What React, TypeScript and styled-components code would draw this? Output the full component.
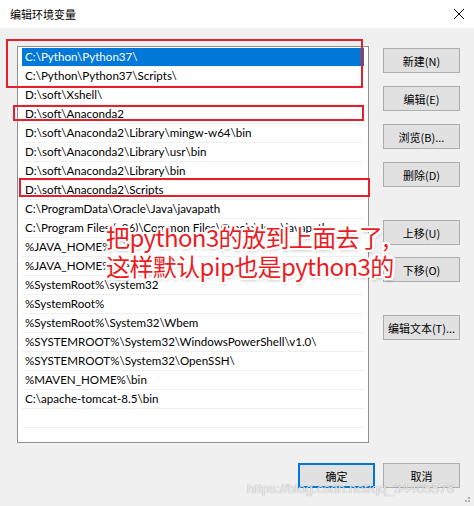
import styled, { createGlobalStyle } from "styled-components";

const GlobalStyle = createGlobalStyle`
  html, body {
    margin: 0;
    padding: 0;
    background: #f0f0f0;
  }
  * {
    box-sizing: border-box;
  }
`;

const Dialog = styled.div`
  position: relative;
  width: 474px;
  height: 506px;
  background: #f0f0f0;
  font-family: "Noto Sans", "Noto Sans CJK SC", sans-serif;
  color: #000;
  overflow: hidden;
`;

const TitleBar = styled.div`
  height: 28px;
  background: #fff;
  display: flex;
  align-items: center;
  justify-content: space-between;
  padding: 0 9px 0 10px;
`;

const Title = styled.span`
  font-family: "Noto Sans CJK SC", sans-serif;
  font-size: 11px;
`;

const Body = styled.div`
  display: flex;
  gap: 14px;
  padding: 18px 14px 0 17px;
`;

const ListBox = styled.div`
  width: 353px;
  height: 397px;
  background: #fff;
  border: 1px solid #8f8f8f;
  padding: 1px 4px;
  overflow: hidden;
`;

const Row = styled.div<{ $selected?: boolean }>`
  height: 19px;
  line-height: 18px;
  padding-left: 3px;
  font-family: Lato, "Noto Sans", sans-serif;
  font-size: 11.6px;
  white-space: nowrap;
  overflow: hidden;
  border-bottom: 1px solid #f0f0f0;
  background: ${(p) => (p.$selected ? "#0078d7" : "transparent")};
  color: ${(p) => (p.$selected ? "#fff" : "#000")};
`;

const ButtonColumn = styled.div`
  display: flex;
  flex-direction: column;
  gap: 33px;
  padding-top: 2px;
`;

const ButtonGroup = styled.div<{ $gap: number }>`
  display: flex;
  flex-direction: column;
  gap: ${(p) => p.$gap}px;
`;

const Button = styled.div<{ $primary?: boolean }>`
  width: 77px;
  height: 25px;
  display: flex;
  align-items: center;
  justify-content: center;
  background: #e1e1e1;
  border: ${(p) => (p.$primary ? "2px solid #0078d7" : "1px solid #adadad")};
  font-family: "Noto Sans CJK SC", sans-serif;
  font-size: 11px;
`;

const Footer = styled.div`
  display: flex;
  justify-content: flex-end;
  gap: 8px;
  padding: 20px 14px 0 0;
`;

// annotation boxes drawn over the list
const RedBox = styled.div<{ $x: number; $y: number; $w: number; $h: number }>`
  position: absolute;
  left: ${(p) => p.$x}px;
  top: ${(p) => p.$y}px;
  width: ${(p) => p.$w}px;
  height: ${(p) => p.$h}px;
  border: 2px solid #e3202c;
`;

const Note = styled.div`
  position: absolute;
  left: 106px;
  top: 222px;
  font-family: "Noto Sans CJK SC", sans-serif;
  font-size: 24px;
  letter-spacing: -0.6px;
  line-height: 29px;
  color: #ea1c24;
  white-space: nowrap;
  text-shadow: 2px 0 0 #fff, -2px 0 0 #fff, 0 2px 0 #fff, 0 -2px 0 #fff,
    2px 2px 0 #fff, -2px -2px 0 #fff, 2px -2px 0 #fff, -2px 2px 0 #fff,
    1px 3px 3px rgba(0, 0, 0, 0.25);
`;

const Watermark = styled.div`
  position: absolute;
  left: 247px;
  top: 481px;
  font-family: "Liberation Sans", sans-serif;
  font-size: 13.5px;
  color: rgba(255, 255, 255, 0.85);
  text-shadow: 0 0 1px rgba(0, 0, 0, 0.45);
  white-space: nowrap;
`;

const Grip = styled.svg`
  position: absolute;
  right: 3px;
  bottom: 3px;
`;

const paths = [
  "C:\\Python\\Python37\\",
  "C:\\Python\\Python37\\Scripts\\",
  "D:\\soft\\Xshell\\",
  "D:\\soft\\Anaconda2",
  "D:\\soft\\Anaconda2\\Library\\mingw-w64\\bin",
  "D:\\soft\\Anaconda2\\Library\\usr\\bin",
  "D:\\soft\\Anaconda2\\Library\\bin",
  "D:\\soft\\Anaconda2\\Scripts",
  "C:\\ProgramData\\Oracle\\Java\\javapath",
  "C:\\Program Files (x86)\\Common Files\\Oracle\\Java\\javapath",
  "%JAVA_HOME%\\bin",
  "%JAVA_HOME%\\jre\\bin",
  "%SystemRoot%\\system32",
  "%SystemRoot%",
  "%SystemRoot%\\System32\\Wbem",
  "%SYSTEMROOT%\\System32\\WindowsPowerShell\\v1.0\\",
  "%SYSTEMROOT%\\System32\\OpenSSH\\",
  "%MAVEN_HOME%\\bin",
  "C:\\apache-tomcat-8.5\\bin",
  "",
  "",
];

const buttonGroups = [
  { gap: 13, labels: ["新建(N)", "编辑(E)", "浏览(B)...", "删除(D)"] },
  { gap: 12, labels: ["上移(U)", "下移(O)"] },
  { gap: 0, labels: ["编辑文本(T)..."] },
];

function App() {
  return (
    <>
      <GlobalStyle />
      <Dialog>
        <TitleBar>
          <Title>编辑环境变量</Title>
          <svg width="12" height="12" viewBox="0 0 12 12">
            <path d="M1 1 L11 11 M11 1 L1 11" stroke="#000" strokeWidth="1" />
          </svg>
        </TitleBar>
        <Body>
          <ListBox>
            {paths.map((p, i) => (
              <Row key={i} $selected={i === 0}>
                {p}
              </Row>
            ))}
          </ListBox>
          <ButtonColumn>
            {buttonGroups.map((g) => (
              <ButtonGroup key={g.labels[0]} $gap={g.gap}>
                {g.labels.map((l) => (
                  <Button key={l}>{l}</Button>
                ))}
              </ButtonGroup>
            ))}
          </ButtonColumn>
        </Body>
        <Footer>
          <Button $primary>确定</Button>
          <Button>取消</Button>
        </Footer>

        <RedBox $x={6} $y={39} $w={357} $h={49} />
        <RedBox $x={13} $y={105} $w={351} $h={16} />
        <RedBox $x={19} $y={178} $w={351} $h={19} />

        <Note>
          把python3的放到上面去了,
          <br />
          这样默认pip也是python3的
        </Note>

        <Watermark>https://blog.csdn.net/qq_34405576</Watermark>
        <Grip width="10" height="10" viewBox="0 0 10 10">
          <rect x="7" y="7" width="2" height="2" fill="#b0b0b0" />
          <rect x="4" y="7" width="2" height="2" fill="#b0b0b0" />
          <rect x="7" y="4" width="2" height="2" fill="#b0b0b0" />
        </Grip>
      </Dialog>
    </>
  );
}

export default App;
